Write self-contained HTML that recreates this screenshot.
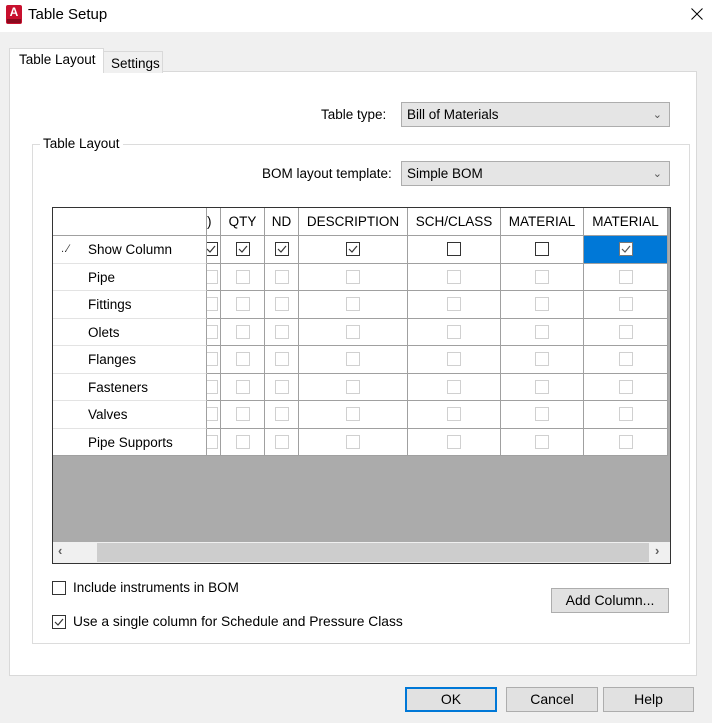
<!DOCTYPE html>
<html><head><style>
*{box-sizing:border-box;margin:0;padding:0}
body{width:712px;height:723px;background:#f0f0f0;font-family:"Liberation Sans",sans-serif;font-size:13px;color:#000;position:relative;overflow:hidden}
.a{position:absolute}
.cb{position:absolute;width:14px;height:14px;border:1px solid #333;background:#fff}
.cb.l{border-color:#d0d0d0}
.cb svg{position:absolute;left:1px;top:1px}
.grid{position:absolute;left:53px;top:208px;display:grid;grid-template-columns:154px 14px 44px 34px 109px 93px 83px 84px;grid-template-rows:28px repeat(8,27.5px);background:#fff}
.c{position:relative;border-right:1px solid #a0a0a0;border-bottom:1px solid #a0a0a0;overflow:hidden;text-align:center;line-height:27px;font-size:13.5px}
.rh{border-right:1px solid #a0a0a0;border-bottom:1px solid #e3e3e3;text-align:left;padding-left:35px;line-height:27px;font-size:13.5px;position:relative}
.c .cb{left:50%;top:6px;margin-left:-7px}
.p .cb{left:-3px;margin-left:0}
.sel{background:#0078d7}
.sel .cb{border-color:#777}
.dd{position:absolute;height:25px;background:#e5e5e5;border:1px solid #adadad;padding-left:5px;line-height:24px;font-size:13.5px}
.btn{position:absolute;height:25px;background:#e1e1e1;border:1px solid #adadad;text-align:center;line-height:23px;font-size:14px}
</style></head><body>
<div class="a" style="left:0;top:0;width:712px;height:32px;background:#fff"></div>
<div class="a" style="left:6px;top:5px;width:16px;height:19px;background:#c8102e;border-radius:2px;color:#fff;font-size:12px;font-weight:bold;text-align:center;line-height:14px">A<div style="position:absolute;left:1px;bottom:1px;width:14px;height:4px;background:#8a0a1e"></div></div>
<div class="a" style="left:28px;top:6px;font-size:15px">Table Setup</div>
<svg class="a" style="left:691px;top:8px" width="12" height="12"><path d="M0.5 0.5 L11.5 11.5 M11.5 0.5 L0.5 11.5" stroke="#000" stroke-width="1"/></svg>

<!-- tabs -->
<div class="a" style="left:9px;top:71px;width:688px;height:605px;background:#fff;border:1px solid #d9d9d9"></div>
<div class="a" style="left:103px;top:51px;width:60px;height:22px;background:#f0f0f0;border:1px solid #d9d9d9;border-bottom:none;padding:4px 0 0 7px;font-size:13.5px">Settings</div>
<div class="a" style="left:9px;top:48px;width:95px;height:25px;background:#fff;border:1px solid #d9d9d9;border-bottom:none;padding:3px 0 0 9px;font-size:13.5px">Table Layout</div>

<div class="a" style="left:321px;top:107px;font-size:13.5px">Table type:</div>
<div class="dd" style="left:401px;top:102px;width:269px">Bill of Materials<span style="position:absolute;right:7px;top:0;font-size:11px;color:#555">&#8964;</span></div>

<!-- group -->
<div class="a" style="left:32px;top:144px;width:658px;height:500px;border:1px solid #dcdcdc"></div>
<div class="a" style="left:40px;top:136px;background:#fff;padding:0 3px;font-size:13.5px">Table Layout</div>

<div class="a" style="left:262px;top:166px;font-size:13.5px">BOM layout template:</div>
<div class="dd" style="left:401px;top:161px;width:269px">Simple BOM<span style="position:absolute;right:7px;top:0;font-size:11px;color:#555">&#8964;</span></div>

<!-- table frame -->
<div class="a" style="left:52px;top:207px;width:619px;height:357px;border:1px solid #333;background:#ababab"></div>
<div class="grid">
<div class="rh" style="border-bottom-color:#a0a0a0"></div>
<div class="c" style="text-align:left;padding-left:0">&#41;</div><div class="c">QTY</div><div class="c">ND</div><div class="c">DESCRIPTION</div><div class="c">SCH/CLASS</div><div class="c">MATERIAL</div><div class="c">MATERIAL</div>

<div class="rh"><span style="position:absolute;left:8px;top:0;font-size:11px;color:#333">..&#x2215;</span>Show Column</div>
<div class="c p"><span class="cb"><svg width="10" height="10"><path d="M1 5 L4 8 L9 2" fill="none" stroke="#333" stroke-width="1.2"/></svg></span></div>
<div class="c"><span class="cb"><svg width="10" height="10"><path d="M1 5 L4 8 L9 2" fill="none" stroke="#333" stroke-width="1.2"/></svg></span></div>
<div class="c"><span class="cb"><svg width="10" height="10"><path d="M1 5 L4 8 L9 2" fill="none" stroke="#333" stroke-width="1.2"/></svg></span></div>
<div class="c"><span class="cb"><svg width="10" height="10"><path d="M1 5 L4 8 L9 2" fill="none" stroke="#333" stroke-width="1.2"/></svg></span></div>
<div class="c"><span class="cb"></span></div>
<div class="c"><span class="cb"></span></div>
<div class="c sel"><span class="cb"><svg width="10" height="10"><path d="M1 5 L4 8 L9 2" fill="none" stroke="#555" stroke-width="1.2"/></svg></span></div>

<div class="rh">Pipe</div><div class="c p"><span class="cb l"></span></div><div class="c"><span class="cb l"></span></div><div class="c"><span class="cb l"></span></div><div class="c"><span class="cb l"></span></div><div class="c"><span class="cb l"></span></div><div class="c"><span class="cb l"></span></div><div class="c"><span class="cb l"></span></div>
<div class="rh">Fittings</div><div class="c p"><span class="cb l"></span></div><div class="c"><span class="cb l"></span></div><div class="c"><span class="cb l"></span></div><div class="c"><span class="cb l"></span></div><div class="c"><span class="cb l"></span></div><div class="c"><span class="cb l"></span></div><div class="c"><span class="cb l"></span></div>
<div class="rh">Olets</div><div class="c p"><span class="cb l"></span></div><div class="c"><span class="cb l"></span></div><div class="c"><span class="cb l"></span></div><div class="c"><span class="cb l"></span></div><div class="c"><span class="cb l"></span></div><div class="c"><span class="cb l"></span></div><div class="c"><span class="cb l"></span></div>
<div class="rh">Flanges</div><div class="c p"><span class="cb l"></span></div><div class="c"><span class="cb l"></span></div><div class="c"><span class="cb l"></span></div><div class="c"><span class="cb l"></span></div><div class="c"><span class="cb l"></span></div><div class="c"><span class="cb l"></span></div><div class="c"><span class="cb l"></span></div>
<div class="rh">Fasteners</div><div class="c p"><span class="cb l"></span></div><div class="c"><span class="cb l"></span></div><div class="c"><span class="cb l"></span></div><div class="c"><span class="cb l"></span></div><div class="c"><span class="cb l"></span></div><div class="c"><span class="cb l"></span></div><div class="c"><span class="cb l"></span></div>
<div class="rh">Valves</div><div class="c p"><span class="cb l"></span></div><div class="c"><span class="cb l"></span></div><div class="c"><span class="cb l"></span></div><div class="c"><span class="cb l"></span></div><div class="c"><span class="cb l"></span></div><div class="c"><span class="cb l"></span></div><div class="c"><span class="cb l"></span></div>
<div class="rh" style="border-bottom-color:#a0a0a0">Pipe Supports</div><div class="c p"><span class="cb l"></span></div><div class="c"><span class="cb l"></span></div><div class="c"><span class="cb l"></span></div><div class="c"><span class="cb l"></span></div><div class="c"><span class="cb l"></span></div><div class="c"><span class="cb l"></span></div><div class="c"><span class="cb l"></span></div>
</div>
<!-- scrollbar -->
<div class="a" style="left:53px;top:542px;width:617px;height:21px;background:#f0f0f0"></div>
<div class="a" style="left:97px;top:543px;width:552px;height:19px;background:#cdcdcd"></div>
<div class="a" style="left:58px;top:543px;font-size:13px;font-weight:bold;color:#606060">&#8249;</div>
<div class="a" style="left:655px;top:543px;font-size:13px;font-weight:bold;color:#606060">&#8250;</div>

<!-- options -->
<div class="cb" style="left:52px;top:581px;border-color:#333"></div>
<div class="a" style="left:73px;top:580px;font-size:13.5px">Include instruments in BOM</div>
<div class="cb" style="left:52px;top:615px;border-color:#333"><svg width="10" height="10"><path d="M1 5 L4 8 L9 2" fill="none" stroke="#333" stroke-width="1.2"/></svg></div>
<div class="a" style="left:73px;top:614px;font-size:13.8px">Use a single column for Schedule and Pressure Class</div>
<div class="btn" style="left:551px;top:588px;width:118px">Add Column...</div>

<div class="btn" style="left:405px;top:687px;width:92px;border:2px solid #0078d7;line-height:21px">OK</div>
<div class="btn" style="left:506px;top:687px;width:92px">Cancel</div>
<div class="btn" style="left:603px;top:687px;width:91px">Help</div>
</body></html>
